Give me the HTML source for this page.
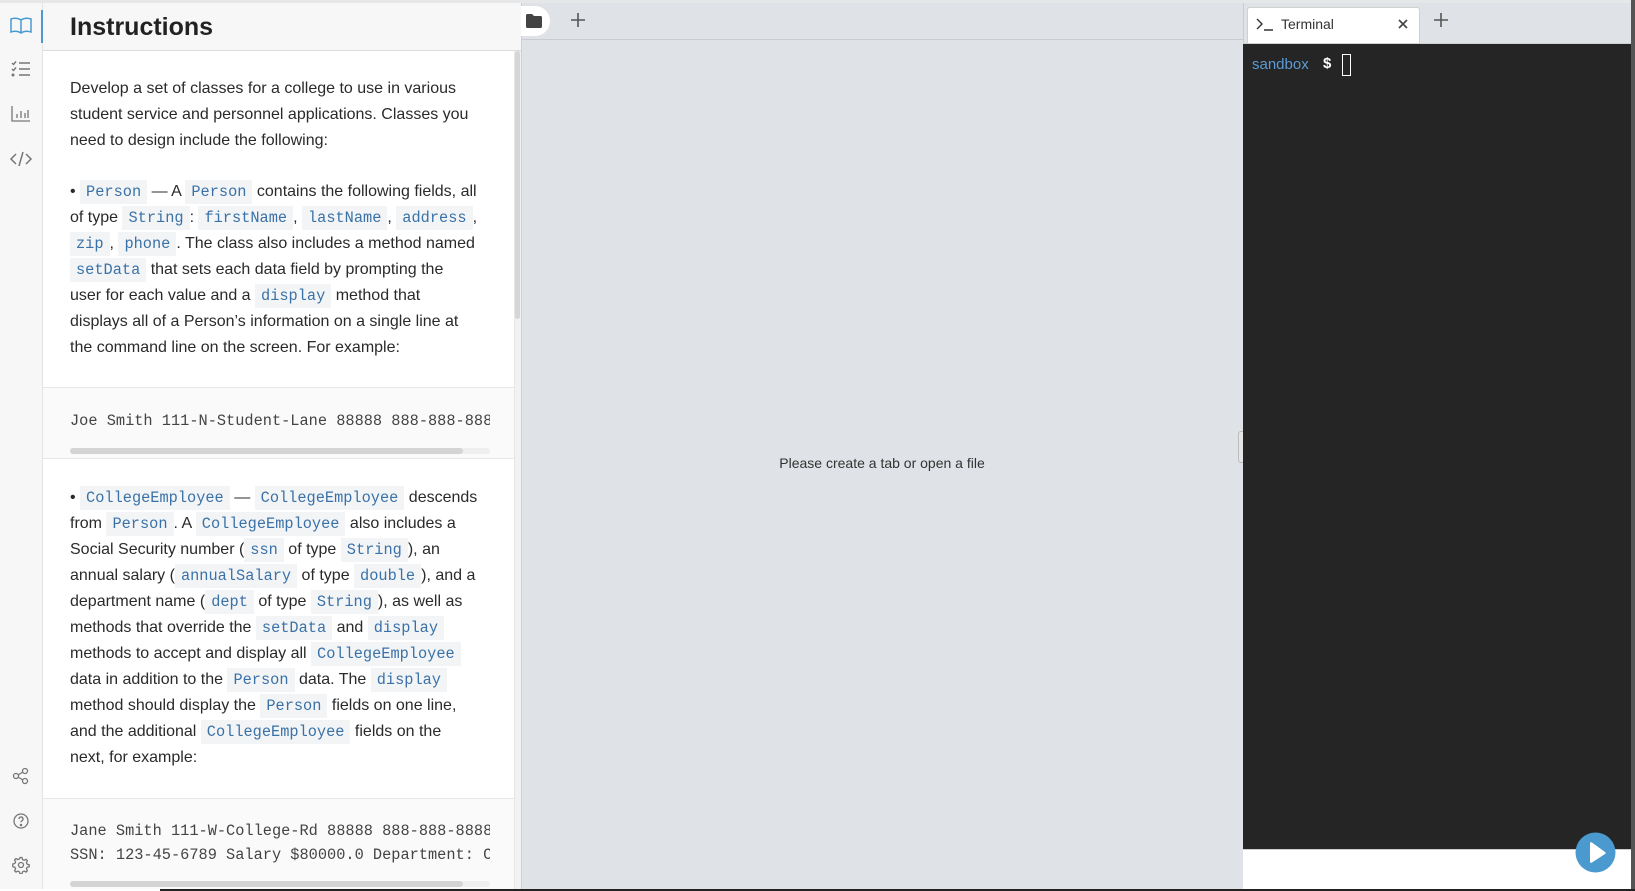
<!DOCTYPE html>
<html><head><meta charset="utf-8"><style>
*{margin:0;padding:0;box-sizing:border-box}
body{width:1635px;height:891px;overflow:hidden;background:#fff;font-family:"Liberation Sans",sans-serif;position:relative}
.abs{position:absolute}
#top{left:0;top:0;width:1635px;height:3px;background:#e6e7e9}
#side{left:0;top:3px;width:43px;height:886px;background:#f7f7f7;border-right:1px solid #e3e3e3}
#act{left:41px;top:10px;width:3px;height:33px;background:#4a9ad0}
#hdr{left:43px;top:3px;width:478px;height:48px;background:#f7f7f7;border-bottom:1px solid #dcdcdc}
#hdr h1{position:absolute;left:27px;top:10px;font-size:25px;font-weight:bold;color:#222}
#content{left:43px;top:51px;width:471px;height:838px;background:#fff;overflow:hidden}
#sb{left:514px;top:51px;width:7px;height:838px;background:#f2f2f2;border-left:1px solid #e6e6e6}
#sbth{left:515px;top:51px;width:5px;height:268px;background:#d6d6d6;border-radius:3px}
.p{position:absolute;left:27px;font-size:16px;color:#2a2a2a;line-height:26px;white-space:nowrap}
.c{font-family:"Liberation Mono",monospace;font-size:15.3px;line-height:16px;color:#3a72a8;background:#f3f4f5;padding:3px 6px}
.blk{position:absolute;left:0;width:471px;background:#fafafa;border-top:1px solid #e3e8ea;border-bottom:1px solid #e3e8ea}
.blk pre{position:absolute;left:27px;font-family:"Liberation Mono",monospace;font-size:15.3px;color:#444;line-height:24px;width:420px;overflow:hidden}
.track{position:absolute;left:27px;width:420px;height:6px;background:#efefef;border-radius:3px}
.track div{width:393px;height:6px;background:#d4d4d4;border-radius:3px}
#ed{left:521px;top:3px;width:722px;height:886px;background:#dfe2e6;border-left:1px solid #d0d0d0}
#edbar{left:521px;top:3px;width:722px;height:37px;border-bottom:1px solid #c9ccd0}
#fold{left:521px;top:6px;width:29px;height:30px;background:#fff;border-radius:0 15px 15px 0}
#term{left:1243px;top:3px;width:388px;height:886px;background:#dfe2e6;border-left:1px solid #c9ccd0}
#ttab{left:1247px;top:7px;width:173px;height:37px;background:#fff;border-radius:3px 3px 0 0;border:1px solid #d0d0d0;border-bottom:none}
#tdark{left:1243px;top:43px;width:388px;height:806px;background:#252525;border-top:1px solid #cfcfcf}
#twhite{left:1243px;top:849px;width:388px;height:40px;background:#fff;border-top:1px solid #ccc}
#redge{left:1631px;top:0;width:4px;height:891px;background:#555}
#bot{left:160px;top:889px;width:1475px;height:2px;background:#222}
</style></head><body>
<div id="top" class="abs"></div>
<div id="side" class="abs">
<svg class="abs" style="left:9px;top:13px" width="24" height="20" viewBox="0 0 24 20" fill="none" stroke="#4a9ad0" stroke-width="1.5"><path d="M12 4C9 2 5 2 2 3v13c3-1 7-1 10 1 3-2 7-2 10-1V3c-3-1-7-1-10 1zM12 4v13"/></svg>
<svg class="abs" style="left:10px;top:57px" width="22" height="18" viewBox="0 0 22 18" fill="none" stroke="#777" stroke-width="1.4"><path d="M2 3l1.5 1.5L6 1.5M9 3h11M2 9l1.5 1.5L6 7.5M9 9h11M9 15h11"/><circle cx="3" cy="15" r="0.8" fill="#777"/></svg>
<svg class="abs" style="left:11px;top:101px" width="20" height="18" viewBox="0 0 20 18" fill="none" stroke="#777" stroke-width="1.3"><path d="M1 2v15h18M6 14v-4M10 14V7M14 14v-5M17 14V6"/></svg>
<svg class="abs" style="left:9px;top:147px" width="24" height="18" viewBox="0 0 24 18" fill="none" stroke="#777" stroke-width="1.5"><path d="M7 4L2 9l5 5M17 4l5 5-5 5M14 2l-4 14"/></svg>
<svg class="abs" style="left:12px;top:764px" width="18" height="18" viewBox="0 0 18 18" fill="none" stroke="#777" stroke-width="1.3"><circle cx="4" cy="9" r="2.5"/><circle cx="13" cy="4" r="2.5"/><circle cx="13" cy="14" r="2.5"/><path d="M6 8l5-3M6 10l5 3"/></svg>
<svg class="abs" style="left:12px;top:809px" width="18" height="18" viewBox="0 0 18 18" fill="none" stroke="#777" stroke-width="1.3"><circle cx="9" cy="9" r="7"/><path d="M7 7a2 2 0 1 1 3 1.7c-.7.4-1 .8-1 1.6"/><circle cx="9" cy="13" r=".6" fill="#777"/></svg>
<svg class="abs" style="left:12px;top:853px" width="18" height="18" viewBox="0 0 18 18" fill="none" stroke="#777" stroke-width="1.3"><circle cx="9" cy="9" r="2.5"/><path d="M8 1.5h2l.5 2 1.6.8 1.9-1 1.4 1.4-1 1.9.8 1.6 2 .5v2l-2 .5-.8 1.6 1 1.9-1.4 1.4-1.9-1-1.6.8-.5 2H8l-.5-2-1.6-.8-1.9 1-1.4-1.4 1-1.9-.8-1.6-2-.5V8l2-.5.8-1.6-1-1.9 1.4-1.4 1.9 1 1.6-.8z"/></svg>
</div>
<div id="act" class="abs"></div>
<div id="hdr" class="abs"><h1>Instructions</h1></div>
<div id="content" class="abs">
<div class="p" style="top:25px">Develop a set of classes for a college to use in various<br>student service and personnel applications. Classes you<br>need to design include the following:</div>
<div class="p" style="top:128px">• <span class="c">Person</span> — A <span class="c">Person</span> contains the following fields, all<br>of type <span class="c">String</span>: <span class="c">firstName</span>, <span class="c">lastName</span>, <span class="c">address</span>,<br><span class="c">zip</span>, <span class="c">phone</span>. The class also includes a method named<br><span class="c">setData</span> that sets each data field by prompting the<br>user for each value and a <span class="c">display</span> method that<br>displays all of a Person’s information on a single line at<br>the command line on the screen. For example:</div>
<div class="blk" style="top:336px;height:72px"><pre style="top:21px">Joe Smith 111-N-Student-Lane 88888 888-888-8888</pre><div class="track" style="top:60px"><div></div></div></div>
<div class="p" style="top:434px">• <span class="c">CollegeEmployee</span> — <span class="c">CollegeEmployee</span> descends<br>from <span class="c">Person</span>. A <span class="c">CollegeEmployee</span> also includes a<br>Social Security number (<span class="c">ssn</span> of type <span class="c">String</span>), an<br>annual salary (<span class="c">annualSalary</span> of type <span class="c">double</span>), and a<br>department name (<span class="c">dept</span> of type <span class="c">String</span>), as well as<br>methods that override the <span class="c">setData</span> and <span class="c">display</span><br>methods to accept and display all <span class="c">CollegeEmployee</span><br>data in addition to the <span class="c">Person</span> data. The <span class="c">display</span><br>method should display the <span class="c">Person</span> fields on one line,<br>and the additional <span class="c">CollegeEmployee</span> fields on the<br>next, for example:</div>
<div class="blk" style="top:747px;height:100px"><pre style="top:20px">Jane Smith 111-W-College-Rd 88888 888-888-8888
SSN: 123-45-6789 Salary $80000.0 Department: CS</pre><div class="track" style="top:82px"><div></div></div></div>
</div>
<div id="sb" class="abs"></div><div id="sbth" class="abs"></div>
<div id="ed" class="abs"></div>
<div id="edbar" class="abs"></div>
<div id="fold" class="abs"><svg class="abs" style="left:5px;top:8px" width="16" height="14" viewBox="0 0 16 14"><path d="M0 1.5Q0 0 1.5 0H6l2 2h6.5Q16 2 16 3.5v9q0 1.5-1.5 1.5h-13Q0 14 0 12.5z" fill="#444"/></svg></div>
<svg class="abs" style="left:570px;top:12px" width="16" height="16" viewBox="0 0 16 16" stroke="#555" stroke-width="1.6"><path d="M8 1v14M1 8h14"/></svg>
<div class="abs" style="left:521px;top:455px;width:722px;text-align:center;font-size:14px;color:#333">Please create a tab or open a file</div>
<div class="abs" style="left:1238px;top:431px;width:10px;height:32px;background:#e6e6e6;border:1px solid #bbb;border-radius:3px"></div>
<div id="term" class="abs"></div>
<div id="ttab" class="abs">
<svg class="abs" style="left:8px;top:9px" width="18" height="14" viewBox="0 0 18 14" fill="none" stroke="#333" stroke-width="1.4"><path d="M1 2l5 5-5 5M8 13h9"/></svg>
<span class="abs" style="left:33px;top:8px;font-size:14px;color:#333">Terminal</span>
<svg class="abs" style="left:150px;top:11px" width="10" height="10" viewBox="0 0 10 10" stroke="#444" stroke-width="1.6"><path d="M1 1l8 8M9 1L1 9"/></svg>
</div>
<svg class="abs" style="left:1433px;top:12px" width="16" height="16" viewBox="0 0 16 16" stroke="#555" stroke-width="1.6"><path d="M8 1v14M1 8h14"/></svg>
<div id="tdark" class="abs">
<span class="abs" style="left:9px;top:12px;font-size:15px;color:#5b9bd5">sandbox</span>
<span class="abs" style="left:80px;top:11px;font-size:15px;color:#fff;font-weight:bold">$</span>
<div class="abs" style="left:99px;top:10px;width:9px;height:22px;border:1.5px solid #fff"></div>
</div>
<div id="twhite" class="abs"></div>
<svg class="abs" style="left:1575px;top:832px" width="41" height="41" viewBox="0 0 41 41"><circle cx="20.5" cy="20.5" r="20" fill="#4a9ad0"/><path d="M15 11.5v18q0 2 2 1l13-8.5q1.5-1 0-2L17 10.5q-2-1-2 1z" fill="#fff"/></svg>
<div id="redge" class="abs"></div>
<div id="bot" class="abs"></div>
</body></html>
